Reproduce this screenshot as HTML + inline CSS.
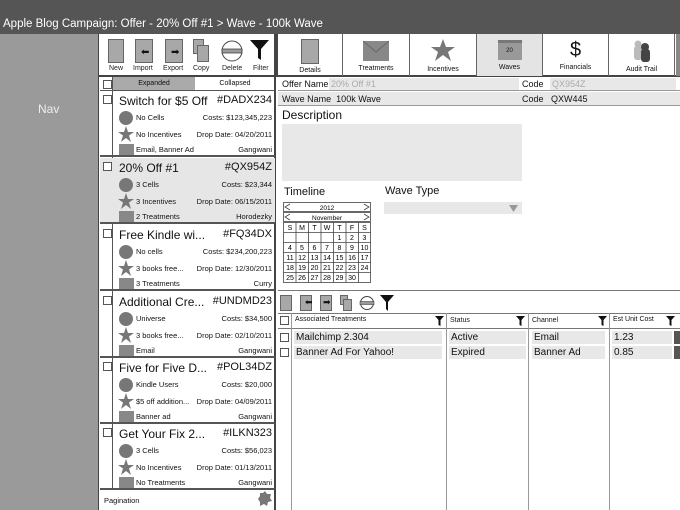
<!DOCTYPE html>
<html><head><meta charset="utf-8"><style>
*{margin:0;padding:0;box-sizing:border-box}
body{width:680px;height:510px;overflow:hidden;background:#fff;font-family:"Liberation Sans",sans-serif;color:#111;position:relative}
.a{position:absolute}
.top{left:0;top:0;width:680px;height:34px;background:#555}
.title{left:3px;top:18px;font-size:11.5px;color:#fff;white-space:nowrap}
.nav{left:0;top:34px;width:99px;height:476px;background:#9a9a9a;border-right:1px solid #444}
.navt{left:38px;top:102px;color:#eee;font-size:12px}
.ltb{left:99px;top:34px;width:177px;height:43px;border-bottom:2px solid #444;border-right:2px solid #444}
.tl{font-size:7px;color:#222}
.grayrect{background:#a8a8a8;border:1px solid #666}
.rtab{top:34px;height:42px;border-right:1px solid #666;text-align:center;font-size:7px}
.cb{width:9px;height:9px;border:1px solid #555;background:#fff}
.item{left:100px;width:175px;height:66px;border-bottom:2px solid #555}
.it1{font-size:12px;left:19px;top:3px;white-space:nowrap}
.it2{font-size:11px;right:3px;top:3px}
.sm{font-size:7.5px;white-space:nowrap}
.pie{width:14px;height:14px;border-radius:50%;background:#777}
.env{width:15px;height:11px;background:#888}
.field{background:#e8e8e8}
.hdr{font-size:7px}
</style></head><body>
<div class="a top"></div>
<div class="a title">Apple Blog Campaign: Offer - 20% Off #1 &gt; Wave - 100k Wave</div>
<div class="a nav"></div>
<div class="a navt">Nav</div>

<div class="a ltb"></div>
<div class="a grayrect" style="left:108px;top:39px;width:16px;height:24px"></div>
<div class="a tl" style="left:109px;top:65px">New</div>
<div class="a grayrect" style="left:135px;top:39px;width:18px;height:24px"></div>
<div class="a" style="left:141px;top:48px;font-size:10px;line-height:10px">&#11013;</div>
<div class="a tl" style="left:133px;top:65px">Import</div>
<div class="a grayrect" style="left:165px;top:39px;width:18px;height:24px"></div>
<div class="a" style="left:171px;top:48px;font-size:10px;line-height:10px">&#10145;</div>
<div class="a tl" style="left:163px;top:65px">Export</div>
<div class="a grayrect" style="left:193px;top:39px;width:11px;height:15px"></div>
<div class="a grayrect" style="left:197px;top:45px;width:12px;height:17px"></div>
<div class="a tl" style="left:193px;top:65px">Copy</div>
<svg class="a" style="left:220px;top:40px" width="24" height="22"><circle cx="12" cy="11" r="10" fill="#fff" stroke="#444"/><rect x="2" y="9" width="20" height="4" fill="#999" stroke="#444" stroke-width=".8"/></svg>
<div class="a tl" style="left:222px;top:65px">Delete</div>
<svg class="a" style="left:250px;top:40px" width="19" height="20"><path d="M0 0H19L11 9V20L8 18V9Z" fill="#111"/></svg>
<div class="a tl" style="left:253px;top:65px">Filter</div>

<div class="a" style="left:276px;top:34px;width:404px;height:43px;border-bottom:2px solid #444;border-left:2px solid #444"></div>
<div class="a rtab" style="left:278px;width:65px"><div class="grayrect" style="margin:5px auto 0;width:18px;height:25px"></div><div style="margin-top:3px">Details</div></div>
<div class="a rtab" style="left:343px;width:67px"><div style="margin:7px auto 0;width:26px;height:20px;background:#888"><svg width="26" height="20"><path d="M0 0L13 11L26 0" fill="none" stroke="#666"/></svg></div><div style="margin-top:4px">Treatments</div></div>
<div class="a rtab" style="left:410px;width:67px"><svg style="margin-top:5px" width="24" height="22"><path d="M12 0L15 8H24L17 13L20 22L12 16L4 22L7 13L0 8H9Z" fill="#777"/></svg><div style="margin-top:3px">Incentives</div></div>
<div class="a rtab" style="left:477px;width:66px;background:#e4e4e4"><div style="margin:6px auto 0;width:24px;height:20px;background:#999;border-top:3px solid #777;font-size:6px;line-height:16px">20</div><div style="margin-top:4px">Waves</div></div>
<div class="a rtab" style="left:543px;width:66px"><div style="font-size:20px;margin-top:5px;line-height:22px">$</div><div style="margin-top:3px">Financials</div></div>
<div class="a rtab" style="left:609px;width:66px"><svg style="margin-top:6px" width="22" height="22"><rect x="3" y="6" width="8" height="14" rx="3" fill="#bbb"/><circle cx="7" cy="4" r="3.5" fill="#bbb"/><rect x="10" y="9" width="9" height="13" rx="3" fill="#444"/><circle cx="14" cy="7" r="4" fill="#444"/></svg><div style="margin-top:2px">Audit Trail</div></div>
<div class="a" style="left:676px;top:34px;width:4px;height:42px;background:#888"></div>

<div class="a" style="left:99px;top:77px;width:177px;height:433px;border-right:2px solid #444"></div>
<div class="a" style="left:112px;top:77px;width:1px;height:413px;background:#555"></div>
<div class="a cb" style="left:103px;top:80px"></div>
<div class="a" style="left:113px;top:77px;width:82px;height:13px;background:#aaa;font-size:7px;text-align:center;line-height:13px">Expanded</div>
<div class="a" style="left:195px;top:77px;width:80px;height:13px;font-size:7px;text-align:center;line-height:13px">Collapsed</div>
<div class="a" style="left:100px;top:90px;width:175px;height:1px;background:#555"></div>

<div class="a item" style="top:91px">
<div class="a cb" style="left:3px;top:4px"></div>
<div class="a it1">Switch for $5 Off</div><div class="a it2">#DADX234</div>
<div class="a pie" style="left:19px;top:20px"></div><div class="a sm" style="left:36px;top:22px">No Cells</div><div class="a sm" style="right:3px;top:22px">Costs: $123,345,223</div>
<svg class="a" style="left:18px;top:35px" width="16" height="16"><path d="M8 0L10 6H16L11 9.5L13 16L8 12L3 16L5 9.5L0 6H6Z" fill="#777"/></svg><div class="a sm" style="left:36px;top:39px">No Incentives</div><div class="a sm" style="right:3px;top:39px">Drop Date: 04/20/2011</div>
<div class="a env" style="left:19px;top:53px"></div><div class="a sm" style="left:36px;top:54px">Email, Banner Ad</div><div class="a sm" style="right:3px;top:54px">Gangwani</div>
</div>
<div class="a item" style="top:158px;background:#e6e6e6">
<div class="a cb" style="left:3px;top:4px"></div>
<div class="a it1">20% Off #1</div><div class="a it2">#QX954Z</div>
<div class="a pie" style="left:19px;top:20px"></div><div class="a sm" style="left:36px;top:22px">3 Cells</div><div class="a sm" style="right:3px;top:22px">Costs: $23,344</div>
<svg class="a" style="left:18px;top:35px" width="16" height="16"><path d="M8 0L10 6H16L11 9.5L13 16L8 12L3 16L5 9.5L0 6H6Z" fill="#777"/></svg><div class="a sm" style="left:36px;top:39px">3 Incentives</div><div class="a sm" style="right:3px;top:39px">Drop Date: 06/15/2011</div>
<div class="a env" style="left:19px;top:53px"></div><div class="a sm" style="left:36px;top:54px">2 Treatments</div><div class="a sm" style="right:3px;top:54px">Horodezky</div>
</div>
<div class="a item" style="top:225px">
<div class="a cb" style="left:3px;top:4px"></div>
<div class="a it1">Free Kindle wi...</div><div class="a it2">#FQ34DX</div>
<div class="a pie" style="left:19px;top:20px"></div><div class="a sm" style="left:36px;top:22px">No cells</div><div class="a sm" style="right:3px;top:22px">Costs: $234,200,223</div>
<svg class="a" style="left:18px;top:35px" width="16" height="16"><path d="M8 0L10 6H16L11 9.5L13 16L8 12L3 16L5 9.5L0 6H6Z" fill="#777"/></svg><div class="a sm" style="left:36px;top:39px">3 books free...</div><div class="a sm" style="right:3px;top:39px">Drop Date: 12/30/2011</div>
<div class="a env" style="left:19px;top:53px"></div><div class="a sm" style="left:36px;top:54px">3 Treatments</div><div class="a sm" style="right:3px;top:54px">Curry</div>
</div>
<div class="a item" style="top:292px">
<div class="a cb" style="left:3px;top:4px"></div>
<div class="a it1">Additional Cre...</div><div class="a it2">#UNDMD23</div>
<div class="a pie" style="left:19px;top:20px"></div><div class="a sm" style="left:36px;top:22px">Universe</div><div class="a sm" style="right:3px;top:22px">Costs: $34,500</div>
<svg class="a" style="left:18px;top:35px" width="16" height="16"><path d="M8 0L10 6H16L11 9.5L13 16L8 12L3 16L5 9.5L0 6H6Z" fill="#777"/></svg><div class="a sm" style="left:36px;top:39px">3 books free...</div><div class="a sm" style="right:3px;top:39px">Drop Date: 02/10/2011</div>
<div class="a env" style="left:19px;top:53px"></div><div class="a sm" style="left:36px;top:54px">Email</div><div class="a sm" style="right:3px;top:54px">Gangwani</div>
</div>
<div class="a item" style="top:358px">
<div class="a cb" style="left:3px;top:4px"></div>
<div class="a it1">Five for Five D...</div><div class="a it2">#POL34DZ</div>
<div class="a pie" style="left:19px;top:20px"></div><div class="a sm" style="left:36px;top:22px">Kindle Users</div><div class="a sm" style="right:3px;top:22px">Costs: $20,000</div>
<svg class="a" style="left:18px;top:35px" width="16" height="16"><path d="M8 0L10 6H16L11 9.5L13 16L8 12L3 16L5 9.5L0 6H6Z" fill="#777"/></svg><div class="a sm" style="left:36px;top:39px">$5 off addition...</div><div class="a sm" style="right:3px;top:39px">Drop Date: 04/09/2011</div>
<div class="a env" style="left:19px;top:53px"></div><div class="a sm" style="left:36px;top:54px">Banner ad</div><div class="a sm" style="right:3px;top:54px">Gangwani</div>
</div>
<div class="a item" style="top:424px">
<div class="a cb" style="left:3px;top:4px"></div>
<div class="a it1">Get Your Fix 2...</div><div class="a it2">#ILKN323</div>
<div class="a pie" style="left:19px;top:20px"></div><div class="a sm" style="left:36px;top:22px">3 Cells</div><div class="a sm" style="right:3px;top:22px">Costs: $56,023</div>
<svg class="a" style="left:18px;top:35px" width="16" height="16"><path d="M8 0L10 6H16L11 9.5L13 16L8 12L3 16L5 9.5L0 6H6Z" fill="#777"/></svg><div class="a sm" style="left:36px;top:39px">No Incentives</div><div class="a sm" style="right:3px;top:39px">Drop Date: 01/13/2011</div>
<div class="a env" style="left:19px;top:53px"></div><div class="a sm" style="left:36px;top:54px">No Treatments</div><div class="a sm" style="right:3px;top:54px">Gangwani</div>
</div>
<div class="a sm" style="left:104px;top:496px">Pagination</div>
<svg class="a" style="left:258px;top:491px" width="14" height="16"><path d="M7 0L9 3L13 3L12 7L14 10L10 11L9 15L6 13L2 15L2 11L0 8L2 5L2 2L5 2Z" fill="#777"/></svg>

<div class="a" style="left:278px;top:77px;width:402px;height:14px;border-bottom:1px solid #999;font-size:9px;line-height:14px">
<span class="a" style="left:4px">Offer Name</span><div class="a field" style="left:51px;top:1px;width:190px;height:12px;color:#aaa;padding-left:2px;line-height:12px">20% Off #1</div>
<span class="a" style="left:244px">Code</span><div class="a field" style="left:272px;top:1px;width:126px;height:12px;color:#aaa;padding-left:2px;line-height:12px">QX954Z</div></div>
<div class="a" style="left:278px;top:92px;width:402px;height:14px;border-bottom:1px solid #999;background:#e8e8e8;font-size:9px;line-height:14px">
<span class="a" style="left:4px">Wave Name&nbsp; 100k Wave</span><span class="a" style="left:244px">Code&nbsp;&nbsp; QXW445</span></div>
<div class="a" style="left:282px;top:108px;font-size:12px">Description</div>
<div class="a field" style="left:282px;top:124px;width:240px;height:57px"></div>
<div class="a" style="left:284px;top:186px;font-size:11px">Timeline</div>
<div class="a" style="left:385px;top:185px;font-size:11px">Wave Type</div>
<div class="a field" style="left:384px;top:202px;width:138px;height:12px"><svg class="a" style="left:125px;top:3px" width="9" height="7"><path d="M0 0H9L4.5 7Z" fill="#999"/></svg></div>
<svg class="a" style="left:283px;top:202px" width="89" height="82" font-family="Liberation Sans" font-size="7" text-anchor="middle">
<g stroke="#444" fill="none" stroke-width=".8">
<rect x=".5" y=".5" width="87" height="9"/><rect x=".5" y="10.5" width="87" height="9"/>
<path d="M7 2L2 5L7 8M81 2L86 5L81 8M7 12L2 15L7 18M81 12L86 15L81 18"/>
<rect x=".5" y="20.5" width="87" height="60"/>
<path d="M13 20.5V80.5M25.5 20.5V80.5M38 20.5V80.5M50.5 20.5V80.5M63 20.5V80.5M75.5 20.5V80.5M.5 30.5H88M.5 40.5H88M.5 50.5H88M.5 60.5H88M.5 70.5H88"/>
</g>
<text x="44" y="8" font-size="6.5">2012</text><text x="44" y="18" font-size="6.5">November</text>
<g><text x="7" y="28">S</text><text x="19" y="28">M</text><text x="31.5" y="28">T</text><text x="44" y="28">W</text><text x="56.5" y="28">T</text><text x="69" y="28">F</text><text x="81.5" y="28">S</text>
<text x="56.5" y="38">1</text><text x="69" y="38">2</text><text x="81.5" y="38">3</text>
<text x="7" y="48">4</text><text x="19" y="48">5</text><text x="31.5" y="48">6</text><text x="44" y="48">7</text><text x="56.5" y="48">8</text><text x="69" y="48">9</text><text x="81.5" y="48">10</text>
<text x="7" y="58">11</text><text x="19" y="58">12</text><text x="31.5" y="58">13</text><text x="44" y="58">14</text><text x="56.5" y="58">15</text><text x="69" y="58">16</text><text x="81.5" y="58">17</text>
<text x="7" y="68">18</text><text x="19" y="68">19</text><text x="31.5" y="68">20</text><text x="44" y="68">21</text><text x="56.5" y="68">22</text><text x="69" y="68">23</text><text x="81.5" y="68">24</text>
<text x="7" y="78">25</text><text x="19" y="78">26</text><text x="31.5" y="78">27</text><text x="44" y="78">28</text><text x="56.5" y="78">29</text><text x="69" y="78">30</text></g>
</svg>
<div class="a" style="left:278px;top:290px;width:402px;height:1px;background:#777"></div>

<div class="a grayrect" style="left:280px;top:295px;width:12px;height:16px"></div>
<div class="a grayrect" style="left:300px;top:295px;width:12px;height:16px"></div>
<div class="a" style="left:305px;top:297px;font-size:9px;line-height:10px">&#11013;</div>
<div class="a grayrect" style="left:320px;top:295px;width:12px;height:16px"></div>
<div class="a" style="left:323px;top:297px;font-size:9px;line-height:10px">&#10145;</div>
<div class="a grayrect" style="left:340px;top:295px;width:8px;height:10px"></div>
<div class="a grayrect" style="left:343px;top:299px;width:9px;height:12px"></div>
<svg class="a" style="left:359px;top:296px" width="16" height="14"><circle cx="8" cy="7" r="6.5" fill="#fff" stroke="#444"/><rect x="1" y="5.5" width="14" height="3" fill="#999" stroke="#444" stroke-width=".6"/></svg>
<svg class="a" style="left:380px;top:295px" width="14" height="16"><path d="M0 0H14L8 7V16L6 14V7Z" fill="#111"/></svg>

<div class="a" style="left:278px;top:313px;width:402px;height:1px;background:#777"></div>
<div class="a" style="left:278px;top:328px;width:402px;height:1px;background:#777"></div>
<div class="a" style="left:291px;top:313px;width:1px;height:197px;background:#999"></div>
<div class="a" style="left:446px;top:313px;width:1px;height:197px;background:#999"></div>
<div class="a" style="left:528px;top:313px;width:1px;height:197px;background:#999"></div>
<div class="a" style="left:609px;top:313px;width:1px;height:197px;background:#999"></div>
<div class="a cb" style="left:280px;top:316px"></div>
<div class="a hdr" style="left:295px;top:316px">Associated Treatments</div>
<div class="a hdr" style="left:450px;top:317px">Status</div>
<div class="a hdr" style="left:532px;top:317px">Channel</div>
<div class="a hdr" style="left:613px;top:316px">Est Unit Cost</div>
<svg class="a" style="left:435px;top:316px" width="9" height="10"><path d="M0 0H9L5.5 4V10L3.5 9V4Z" fill="#111"/></svg>
<svg class="a" style="left:516px;top:316px" width="9" height="10"><path d="M0 0H9L5.5 4V10L3.5 9V4Z" fill="#111"/></svg>
<svg class="a" style="left:598px;top:316px" width="9" height="10"><path d="M0 0H9L5.5 4V10L3.5 9V4Z" fill="#111"/></svg>
<svg class="a" style="left:666px;top:316px" width="9" height="10"><path d="M0 0H9L5.5 4V10L3.5 9V4Z" fill="#111"/></svg>

<div class="a cb" style="left:280px;top:333px"></div>
<div class="a field" style="left:294px;top:331px;width:148px;height:13px;font-size:10px;padding-left:2px;line-height:13px">Mailchimp 2.304</div>
<div class="a field" style="left:449px;top:331px;width:77px;height:13px;font-size:10px;padding-left:2px;line-height:13px">Active</div>
<div class="a field" style="left:532px;top:331px;width:73px;height:13px;font-size:10px;padding-left:2px;line-height:13px">Email</div>
<div class="a field" style="left:612px;top:331px;width:60px;height:13px;font-size:10px;padding-left:2px;line-height:13px">1.23</div>
<div class="a" style="left:674px;top:331px;width:6px;height:13px;background:#555"></div>
<div class="a cb" style="left:280px;top:348px"></div>
<div class="a field" style="left:294px;top:346px;width:148px;height:13px;font-size:10px;padding-left:2px;line-height:13px">Banner Ad For Yahoo!</div>
<div class="a field" style="left:449px;top:346px;width:77px;height:13px;font-size:10px;padding-left:2px;line-height:13px">Expired</div>
<div class="a field" style="left:532px;top:346px;width:73px;height:13px;font-size:10px;padding-left:2px;line-height:13px">Banner Ad</div>
<div class="a field" style="left:612px;top:346px;width:60px;height:13px;font-size:10px;padding-left:2px;line-height:13px">0.85</div>
<div class="a" style="left:674px;top:346px;width:6px;height:13px;background:#555"></div>
</body></html>
